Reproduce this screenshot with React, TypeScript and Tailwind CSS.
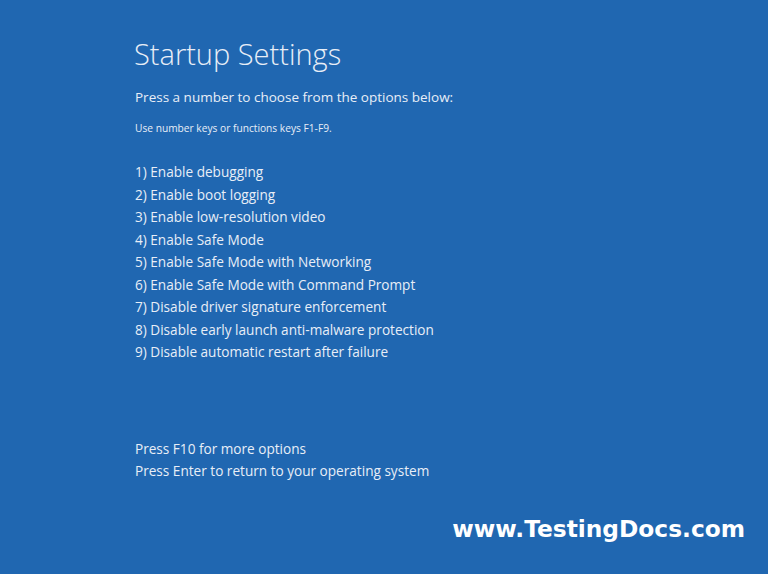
const options = [
  "1) Enable debugging",
  "2) Enable boot logging",
  "3) Enable low-resolution video",
  "4) Enable Safe Mode",
  "5) Enable Safe Mode with Networking",
  "6) Enable Safe Mode with Command Prompt",
  "7) Disable driver signature enforcement",
  "8) Disable early launch anti-malware protection",
  "9) Disable automatic restart after failure",
];

export default function App() {
  return (
    <div
      className="w-[768px] h-[574px] bg-[#2067b1] text-[#e8eef7] flex flex-col pl-[135px] pt-[34px]"
      style={{ fontFamily: '"Open Sans", "Noto Sans", sans-serif' }}
    >
      <h1 className="text-[29px] font-light leading-[40px] -ml-[1px]">Startup Settings</h1>
      <p className="text-[13.5px] leading-[20px] mt-[13px]">
        Press a number to choose from the options below:
      </p>
      <p className="text-[10.2px] leading-[14px] mt-[14px]">
        Use number keys or functions keys F1-F9.
      </p>

      <ul className="mt-[26px] flex flex-col text-[13.6px] leading-[22.5px]">
        {options.map((o) => (
          <li key={o}>{o}</li>
        ))}
      </ul>

      <div className="mt-[74px] flex flex-col text-[13.6px] leading-[22.5px]">
        <span>Press F10 for more options</span>
        <span>Press Enter to return to your operating system</span>
      </div>

      <div className="flex justify-end pr-[23px] mt-[29px]">
        <span
          className="text-[23.3px] font-bold text-white"
          style={{ fontFamily: '"DejaVu Sans", Verdana, sans-serif' }}
        >
          www.TestingDocs.com
        </span>
      </div>
    </div>
  );
}
